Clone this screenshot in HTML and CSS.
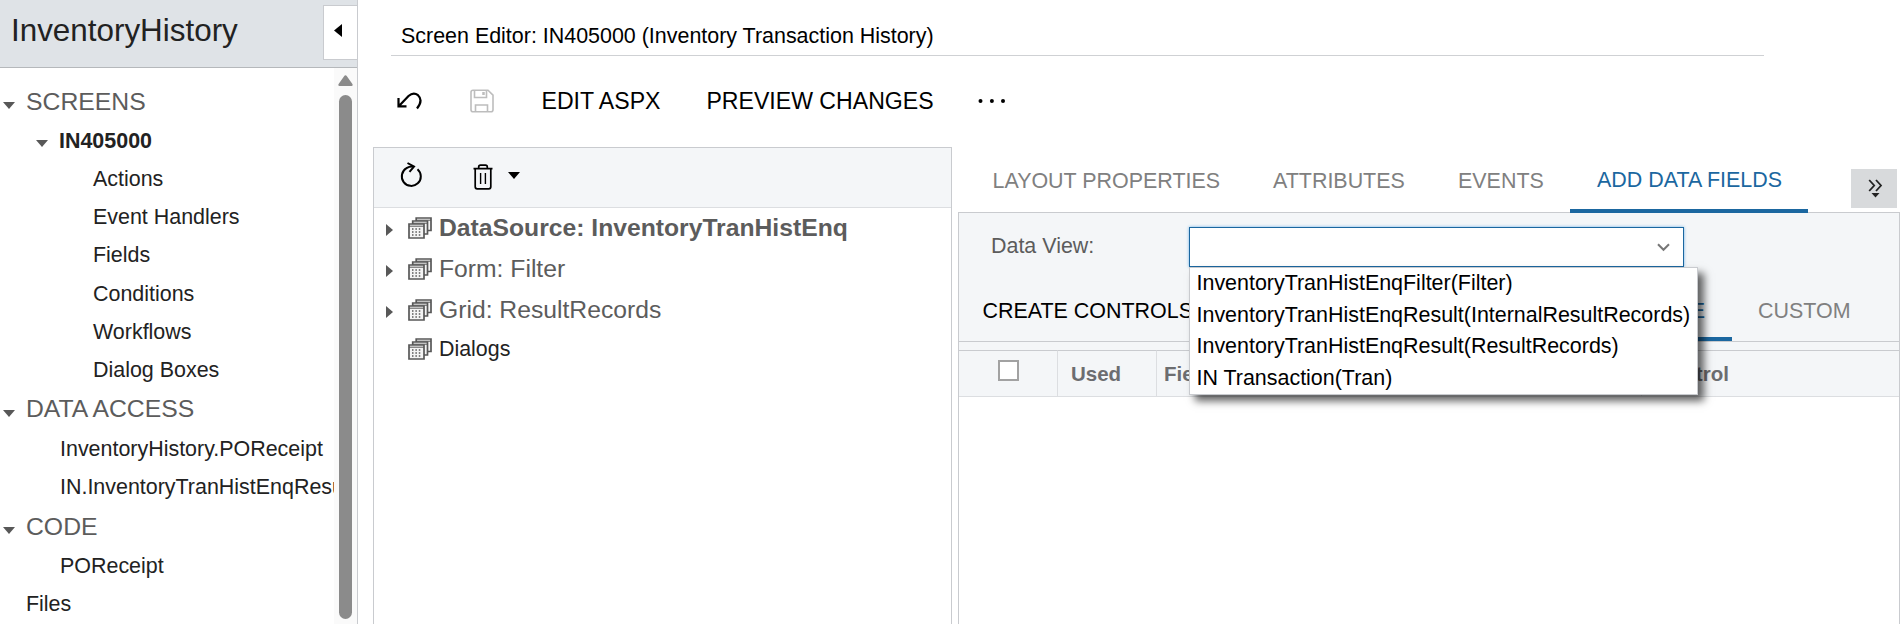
FILE: index.html
```html
<!DOCTYPE html>
<html lang="en">
<head>
<meta charset="utf-8">
<title>Screen Editor</title>
<link rel="stylesheet" href="styles.css">
</head>
<body>
<svg class="defs" width="0" height="0">
  <symbol id="stack" viewBox="0 0 24 22">
    <g fill="#f4f4f4" stroke="#585858" stroke-width="1.700">
      <path d="M8.200 1h14.800v12.500h-14.800z"/><path d="M8.200 3.200h14.800" fill="none" stroke-width="1"/>
      <path d="M4.700 4h14.800v13h-14.800z"/><path d="M4.700 6.200h14.800" fill="none" stroke-width="1"/>
      <path d="M1 7h15v14H1z"/><path d="M1 9.200h15" fill="none" stroke-width="1"/>
    </g>
    <path d="M4 12h10M4 15h10M4 18h10" stroke="#585858" stroke-width="1.500" stroke-dasharray="1.500 1.900"/>
  </symbol>
</svg>
<div class="app">
  <aside class="sidebar">
    <header class="side-head"><h1>InventoryHistory</h1>
      <button class="collapse"><svg width="8" height="13" viewBox="0 0 8 13"><path d="M8 0v13L0 6.500z"/></svg></button>
    </header>
    <div class="side-body">
      <nav class="tree">
        <div class="group"><i class="down"></i>SCREENS</div>
        <div class="item l1 bold"><i class="down"></i>IN405000</div>
        <div class="item l2">Actions</div>
        <div class="item l2">Event Handlers</div>
        <div class="item l2">Fields</div>
        <div class="item l2">Conditions</div>
        <div class="item l2">Workflows</div>
        <div class="item l2">Dialog Boxes</div>
        <div class="group"><i class="down"></i>DATA ACCESS</div>
        <div class="item l1">InventoryHistory.POReceipt</div>
        <div class="item l1">IN.InventoryTranHistEnqResult</div>
        <div class="group"><i class="down"></i>CODE</div>
        <div class="item l1">POReceipt</div>
        <div class="item l0">Files</div>
      </nav>
      <div class="scroll">
        <svg width="15" height="11" viewBox="0 0 15 11"><path d="M7.500.3q.8 0 1.400.9l5.500 7.800q.8 1.700-.9 2h-12q-1.700-.3-.9-2l5.500-7.800q.6-.9 1.400-.9z" fill="#8b8b8b"/></svg>
        <div class="thumb"></div>
      </div>
    </div>
  </aside>
  <main class="main">
    <div class="title">Screen Editor: IN405000 (Inventory Transaction History)</div>
    <div class="toolbar">
      <svg class="undo" width="26" height="20" viewBox="0 0 26 20" fill="none" stroke="#000" stroke-width="2.200"><path d="M1.500 7v8.300h8M2 15 11.500 5q5-4.500 9.500-.8 5.500 5-1 13.300"/></svg>
      <svg class="save" width="24" height="24" viewBox="0 0 24 24" fill="none" stroke="#bdbdbd" stroke-width="1.600"><path d="M3 1.200h15l5 5v14.600q0 2-2 2H3q-2 0-2-2V3.200q0-2 2-2z"/><path d="M4.500 1.500v7h12v-7M5.500 22.500v-6.500h12v6.500"/><path d="M13.500 3v3" stroke-width="2.500"/></svg>
      <span class="edit">EDIT ASPX</span>
      <span class="preview">PREVIEW CHANGES</span>
      <svg class="dots" width="28" height="4" viewBox="0 0 28 4"><circle cx="2.500" cy="2" r="2"/><circle cx="13.900" cy="2" r="2"/><circle cx="25" cy="2" r="2"/></svg>
    </div>
    <div class="panes">
      <section class="left">
        <div class="left-bar">
          <svg class="refresh" width="23" height="26" viewBox="0 0 23 26" fill="none" stroke="#000" stroke-width="2"><path d="M17.500 7.200A9.500 9.500 0 1 1 6.500 6.200Q9 4.500 13 4.600"/><path d="M7.500 1l6.500 3.600-4.500 5.200"/></svg>
          <svg class="trash" width="20" height="26" viewBox="0 0 20 26" fill="none" stroke="#000" stroke-width="1.700"><path d="M.5 4.700h19M5.700 4.500V3q0-1.800 1.800-1.800h5q1.800 0 1.800 1.800v1.500M2.200 5v17.800q0 2 2 2h11.600q2 0 2-2V5"/><path d="M7.600 9v11M12.400 9v11" stroke-width="1.400"/></svg>
          <svg width="12" height="7" viewBox="0 0 12 7"><path d="M0 0h12L6 7z"/></svg>
        </div>
        <div class="node strong"><i class="right"></i><svg class="stack"><use href="#stack"/></svg>DataSource: InventoryTranHistEnq</div>
        <div class="node"><i class="right"></i><svg class="stack"><use href="#stack"/></svg>Form: Filter</div>
        <div class="node"><i class="right"></i><svg class="stack"><use href="#stack"/></svg>Grid: ResultRecords</div>
        <div class="node leaf"><i></i><svg class="stack"><use href="#stack"/></svg>Dialogs</div>
      </section>
      <section class="rightpane">
        <div class="tabs">
          <span class="tab t1">LAYOUT PROPERTIES</span>
          <span class="tab t2">ATTRIBUTES</span>
          <span class="tab t3">EVENTS</span>
          <span class="tab active">ADD DATA FIELDS</span>
          <button class="more"><svg width="15" height="19" viewBox="0 0 15 19"><path d="M1.200 1l5 5.500-5 5.500M8 1l5 5.500L8 12" fill="none" stroke="#222" stroke-width="1.800"/><path d="M3.500 14h8l-4 4.500z" fill="#222"/></svg></button>
        </div>
        <div class="panel">
          <div class="form">
            <label>Data View:</label>
            <div class="combo"><svg width="13" height="9" viewBox="0 0 13 9"><path d="M1 1.200l5.500 5.600L12 1.200" fill="none" stroke="#777" stroke-width="2"/></svg>
              <ul class="menu">
                <li>InventoryTranHistEnqFilter(Filter)</li>
                <li>InventoryTranHistEnqResult(InternalResultRecords)</li>
                <li>InventoryTranHistEnqResult(ResultRecords)</li>
                <li>IN Transaction(Tran)</li>
              </ul>
            </div>
          </div>
          <div class="subbar">
            <span class="create">CREATE CONTROLS</span>
            <div class="subtabs"><span class="sub on">VISIBLE</span><span class="sub custom">CUSTOM</span></div>
          </div>
          <div class="grid-head">
            <div class="c1"><span class="check"></span></div>
            <div class="c2">Used</div>
            <div class="c3">Field Name</div>
            <div class="c4">Control</div>
          </div>
          <div class="grid-body"></div>
        </div>
      </section>
    </div>
  </main>
</div>
</body>
</html>
```
FILE: styles.css
```css
* { box-sizing: border-box; }
body { margin: 0; overflow: hidden; background: #fff; font: 21.44px "Liberation Sans", Arial, sans-serif; color: #222; white-space: nowrap; }
.defs { position: absolute; }
svg { display: block; flex: none; }
button { padding: 0; font: inherit; }
.app { display: flex; height: 624px; }

.sidebar { width: 358px; flex: none; display: flex; flex-direction: column; border-right: 1px solid #c9cbcf; }
.side-head { height: 68px; flex: none; display: flex; justify-content: space-between; background: #dfe3e7; border-bottom: 1px solid #b5b8bb; }
h1 { margin: 0; padding-left: 11px; font-size: 31.4px; font-weight: 400; line-height: 61px; }
.collapse { width: 34px; height: 55px; margin-top: 5px; display: flex; align-items: center; padding: 0 0 4px 10px; background: #fff; border: 1px solid #c9cbcf; border-right: 0; }
.side-body { flex: 1; min-height: 0; display: flex; }
.tree { flex: 1; min-width: 0; overflow: hidden; padding-top: 13px; }
.group, .item { display: flex; align-items: center; }
.group { height: 41px; padding-left: 3px; font-size: 24.75px; color: #5c5c5c; }
.group .down { margin: 8px 11px 0 0; }
.item { height: 38.15px; padding-top: 1px; }
.item .down { margin: 4px 11px 0 -24px; }
.l0 { padding-left: 26px; }
.l1 { padding-left: 60px; }
.l2 { padding-left: 93px; }
.bold { font-weight: 700; }
.down { flex: none; border: 6.500px solid transparent; border-top: 7px solid #585858; border-bottom: 0; }
.scroll { width: 23px; flex: none; padding: 7px 0 0 4px; background: #fafafa; }
.thumb { width: 13px; height: 524px; margin: 9px 0 0 1px; border-radius: 7px; background: #8b8b8b; }

.main { flex: 1; min-width: 0; padding-left: 15px; color: #000; }
.title { width: 1373px; height: 56px; margin-left: 18px; padding: 17px 0 0 10px; line-height: 39px; font-size: 21.45px; border-bottom: 1px solid #cfd1d4; }
.toolbar { height: 91px; padding: 0 0 1px 24px; display: flex; align-items: center; font-size: 23.1px; }
.save { margin-left: 47px; }
.edit { margin-left: 47.500px; }
.preview { margin-left: 46px; }
.dots { margin-left: 44px; }
.panes { display: flex; height: 477px; }

.left { width: 579px; flex: none; border: 1px solid #c9cbcf; border-bottom: 0; }
.left-bar { height: 60px; display: flex; align-items: center; padding: 0 0 5px 26px; background: #f4f6f8; border-bottom: 1px solid #dcdee1; }
.trash { margin: 3px 15px 0 50px; }
.node { height: 41px; display: flex; align-items: center; font-size: 24.7px; padding-bottom: 1px; color: #5c5c5c; }
.node i { width: 7px; margin: 4px 15px 0 12px; }
.right { border: 6px solid transparent; border-left: 7px solid #585858; border-right: 0; }
.stack { width: 24px; height: 22px; margin: 0 7px 1px 0; }
.strong { font-weight: 700; }
.leaf { height: 38px; font-size: 21.4px; color: #222; }

.rightpane { width: 942px; margin-left: 6px; display: flex; flex-direction: column; }
.tabs { height: 65px; flex: none; display: flex; align-items: flex-start; color: #808080; }
.tab { flex: none; line-height: 68px; }
.t1 { width: 315px; padding-left: 34.500px; }
.t2 { width: 185px; }
.t3 { width: 112px; }
.tab.active { width: 238px; height: 66px; line-height: 66px; padding-left: 27px; color: #1b67a0; border-bottom: 4px solid #1b67a0; z-index: 1; }
.more { width: 46px; height: 39px; margin: 22px 0 0 43px; padding-left: 2px; display: flex; justify-content: center; align-items: center; background: #d8dadc; border: 0; }
.panel { flex: 1; border: 1px solid #c9cbcf; border-bottom: 0; display: flex; flex-direction: column; }
.form { height: 67px; flex: none; padding: 14px 0 0 32px; display: flex; background: #f4f6f8; }
.form label { width: 198px; line-height: 39px; color: #5c5c5c; }
.combo { position: relative; width: 495px; height: 40px; display: flex; align-items: center; justify-content: flex-end; padding-right: 13px; background: #fff; border: 1px solid #1b67a0; box-shadow: 0 0 3px #6fb3e6; }
.menu { position: absolute; left: -1px; top: 39px; z-index: 5; width: 509px; height: 128px; margin: 0; padding: 0 0 0 6.500px; list-style: none; background: #fff; border: 1px solid #c9cbcf; box-shadow: 6px 6px 8px rgba(0,0,0,.62); color: #000; }
.menu li { height: 31.6px; line-height: 30px; }
.subbar { height: 62px; flex: none; display: flex; justify-content: space-between; padding: 0 22px 0 23.500px; background: #f4f6f8; border-bottom: 1px solid #c9cbcf; }
.create { line-height: 63px; }
.subtabs { height: 62px; display: flex; border-bottom: 1px solid #c9cbcf; line-height: 62px; color: #808080; }
.sub.on { width: 140px; height: 61px; padding-right: 27px; text-align: right; color: #1b67a0; border-bottom: 4px solid #1b67a0; }
.sub.custom { width: 145px; padding-left: 26px; }
.grid-head { height: 55px; flex: none; display: flex; padding-top: 8px; background: #f4f6f8; border-bottom: 1px solid #dcdee1; font-size: 20.5px; font-weight: 700; line-height: 45px; color: #6c6d70; }
.grid-head > div { flex: none; border-top: 1px solid #c9cbcf; border-right: 1px solid #dcdee1; }
.grid-head .c1 { width: 99px; padding: 9px 0 0 39px; }
.check { display: block; width: 21px; height: 21px; background: #fff; border: 2px solid #a2a2a2; }
.grid-head .c2 { width: 99px; padding-left: 13px; }
.grid-head .c3 { width: 485px; padding-left: 7px; }
.grid-head .c4 { flex: 1; border-right: 0; padding-left: 14px; }
```
